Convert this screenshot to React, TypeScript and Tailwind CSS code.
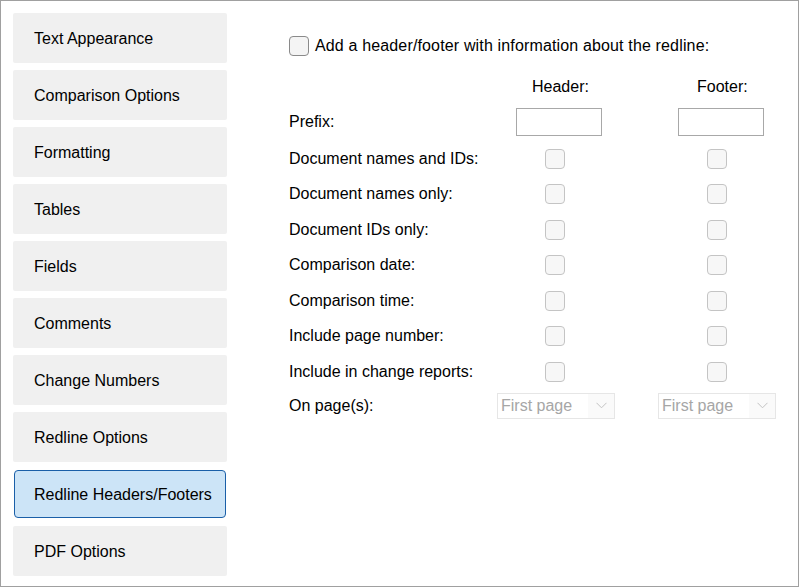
import React from "react";

const items = [
  "Text Appearance",
  "Comparison Options",
  "Formatting",
  "Tables",
  "Fields",
  "Comments",
  "Change Numbers",
  "Redline Options",
  "Redline Headers/Footers",
  "PDF Options",
];

const rows = [
  "Document names and IDs:",
  "Document names only:",
  "Document IDs only:",
  "Comparison date:",
  "Comparison time:",
  "Include page number:",
  "Include in change reports:",
];

function Box() {
  return (
    <div className="w-[20px] h-[20px] rounded-[4px] border border-[#c4c4c4] bg-[#f7f7f7]" />
  );
}

function Dropdown() {
  return (
    <div className="w-[118px] h-[26px] border border-[#e6e6e6] bg-white flex items-center">
      <span className="flex-1 pl-[3px] pt-[1px] text-[#a6a6a6] leading-none">First page</span>
      <div className="w-[26px] h-full bg-[#fafafa] flex items-center justify-center">
        <svg width="11" height="7" viewBox="0 0 11 7">
          <path d="M0.5 0.8 L5.5 5.8 L10.5 0.8" fill="none" stroke="#c2c2c2" strokeWidth="1" />
        </svg>
      </div>
    </div>
  );
}

export default function App() {
  return (
    <div
      className="w-[799px] h-[587px] border border-[#a0a0a0] bg-white flex text-black text-[16px]"
      style={{ fontFamily: '"Liberation Sans", Arial, sans-serif' }}
    >
      <div className="pl-[12px] pt-[12px] flex flex-col gap-[7px] w-[226px] shrink-0">
        {items.map((it) => {
          const sel = it === "Redline Headers/Footers";
          return sel ? (
            <div key={it} className="h-[50px] w-[214px] p-[1px]">
              <div className="h-full w-full rounded-[4px] border border-[#1a5fa8] bg-[#cce4f7] flex items-center pl-[19px] pt-[2px]">
                {it}
              </div>
            </div>
          ) : (
            <div
              key={it}
              className="h-[50px] w-[214px] rounded-[2px] bg-[#f0f0f0] flex items-center pl-[21px] pt-[2px]"
            >
              {it}
            </div>
          );
        })}
      </div>
      <div className="pl-[62px] pt-[35px] flex flex-col">
        <div className="flex items-center h-[20px]">
          <div className="w-[20px] h-[20px] rounded-[4px] border border-[#8a8a8a] bg-[#f4f4f4]" />
          <span className="ml-[6px] tracking-[0.15px]">Add a header/footer with information about the redline:</span>
        </div>
        <div className="mt-[19px] h-[20px] grid grid-cols-[208px_161px_120px] items-center">
          <div />
          <div className="pl-[35px]">Header:</div>
          <div className="pl-[39px]">Footer:</div>
        </div>
        <div className="mt-[13px] h-[28px] grid grid-cols-[208px_161px_120px] items-center">
          <div>Prefix:</div>
          <div className="pl-[19px]">
            <div className="w-[86px] h-[28px] border border-[#a8a8a8] bg-white" />
          </div>
          <div className="pl-[20px]">
            <div className="w-[86px] h-[28px] border border-[#a8a8a8] bg-white" />
          </div>
        </div>
        <div className="mt-[5px] flex flex-col">
          {rows.map((r) => (
            <div key={r} className="h-[35.5px] grid grid-cols-[208px_161px_120px] items-center">
              <div>{r}</div>
              <div className="pl-[48px]">
                <Box />
              </div>
              <div className="pl-[49px]">
                <Box />
              </div>
            </div>
          ))}
        </div>
        <div className="mt-[3px] h-[26px] grid grid-cols-[208px_161px_120px] items-center">
          <div>On page(s):</div>
          <div>
            <Dropdown />
          </div>
          <div>
            <Dropdown />
          </div>
        </div>
      </div>
    </div>
  );
}
